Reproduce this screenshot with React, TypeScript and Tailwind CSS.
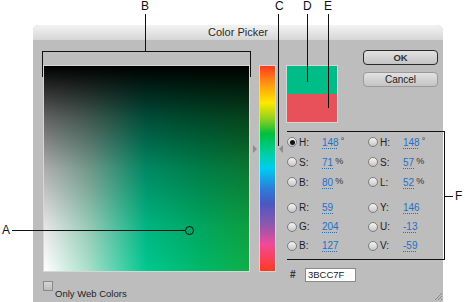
import React from 'react';

type Field = { label: string; value: string; unit?: string; checked?: boolean };

const groupA: [Field, Field][] = [
  [{ label: 'H:', value: '148', unit: '°', checked: true }, { label: 'H:', value: '148', unit: '°' }],
  [{ label: 'S:', value: '71', unit: '%' }, { label: 'S:', value: '57', unit: '%' }],
  [{ label: 'B:', value: '80', unit: '%' }, { label: 'L:', value: '52', unit: '%' }],
];

const groupB: [Field, Field][] = [
  [{ label: 'R:', value: '59' }, { label: 'Y:', value: '146' }],
  [{ label: 'G:', value: '204' }, { label: 'U:', value: '-13' }],
  [{ label: 'B:', value: '127' }, { label: 'V:', value: '-59' }],
];

function Radio({ checked }: { checked?: boolean }) {
  return (
    <span className="w-[10px] h-[10px] shrink-0 rounded-full border border-[#7d7d7d] bg-[linear-gradient(to_bottom,#f4f4f4,#c6c6c6)] flex items-center justify-center">
      {checked && <span className="w-[5px] h-[5px] rounded-full bg-[#111]" />}
    </span>
  );
}

function Cell({ f }: { f: Field }) {
  return (
    <div className="flex items-center">
      <Radio checked={f.checked} />
      <span className="ml-[2px] w-[23px] text-[10px] text-[#222]">{f.label}</span>
      <span className="text-[10px] text-[#1f70c8] underline decoration-dotted underline-offset-2">{f.value}</span>
      {f.unit && <span className="ml-[2px] text-[9px] text-[#333]">{f.unit}</span>}
    </div>
  );
}

function Callout({ label, x }: { label: string; x: number }) {
  return (
    <span className="absolute top-0 text-[12px] leading-[13px] text-[#111]" style={{ left: x }}>
      {label}
    </span>
  );
}

export default function App() {
  return (
    <div className="relative w-[465px] h-[302px] overflow-hidden bg-white font-['Liberation_Sans',Arial,sans-serif]">
      {/* dialog */}
      <div className="ml-[33px] pt-[25px]">
        <div className="w-[410px] h-[277px] rounded-t-[6px] bg-[#bdbdbd] overflow-hidden">
          <div className="h-[15px] bg-[linear-gradient(to_bottom,#f3f3f3,#d6d6d6)] flex items-center justify-center text-[11px] text-[#2a2a2a]">
            Color Picker
          </div>

          <div className="flex items-start pt-[10px] pl-[10px]">
            {/* saturation / brightness field */}
            <div className="mt-[15px] flex flex-col">
              <div className="relative w-[207px] h-[207px] border border-[#d6d6d6] bg-[linear-gradient(to_bottom,#000_0%,rgba(0,0,0,0.62)_25%,rgba(0,0,0,0.32)_50%,rgba(0,0,0,0.1)_78%,rgba(0,0,0,0)_100%),linear-gradient(to_right,#ffffff_0%,#a6dfca_22%,#00c890_50%,#00b86a_76%,#0eaf48_100%)]">
                <span className="absolute left-[141px] top-[160px] w-[9px] h-[9px] rounded-full border border-[#111]" />
              </div>
              <div className="mt-[9px] flex items-start">
                <span className="w-[10px] h-[10px] border border-[#8a8a8a] bg-[linear-gradient(to_bottom,#d6d6d6,#bdbdbd)]" />
                <span className="ml-[2px] mt-[6px] text-[9.5px] text-[#222]">Only Web Colors</span>
              </div>
            </div>

            {/* hue strip */}
            <div className="relative ml-[9px] mt-[15px] w-[17px] h-[207px] border border-[#d6d6d6] bg-[linear-gradient(to_bottom,#ff3a1e_0%,#ff9a10_9%,#ffe900_18%,#8cd020_26%,#00bf3c_33%,#00d0b0_44%,#00ccf2_50%,#2c7cd8_60%,#4a58c0_67%,#8a58b0_77%,#f04a98_87%,#ff3a20_100%)]">
              <span className="absolute left-[-7px] top-[79px] w-0 h-0 border-y-[4px] border-y-transparent border-l-[4px] border-l-[#8c8c8c]" />
              <span className="absolute right-[-8px] top-[79px] w-0 h-0 border-y-[4px] border-y-transparent border-r-[4px] border-r-[#8c8c8c]" />
            </div>

            {/* right side */}
            <div className="ml-[10px] w-[157px] flex flex-col">
              <div className="flex items-start">
                <div className="mt-[15px] w-[52px] h-[58px] border border-[#d6d6d6] flex flex-col">
                  <div className="h-[28px] bg-[#00bd88]" />
                  <div className="flex-1 bg-[#e8515a]" />
                </div>
                <div className="ml-[25px] flex flex-col gap-[7px]">
                  <button className="w-[75px] h-[15px] rounded-[4px] border border-[#2b2b2b] bg-[linear-gradient(to_bottom,#e2e2e2,#c4c4c4)] text-[9.5px] font-bold text-[#333] leading-none">
                    OK
                  </button>
                  <button className="w-[75px] h-[15px] rounded-[4px] border border-[#9a9a9a] bg-[linear-gradient(to_bottom,#e2e2e2,#c4c4c4)] text-[10px] text-[#222] leading-none">
                    Cancel
                  </button>
                </div>
              </div>

              <div className="mt-[9px] pl-[1px]">
                {groupA.map((r, i) => (
                  <div key={i} className="grid grid-cols-[81px_75px] h-[20px] items-center">
                    <Cell f={r[0]} />
                    <Cell f={r[1]} />
                  </div>
                ))}
                <div className="mt-[6px]">
                  {groupB.map((r, i) => (
                    <div key={i} className="grid grid-cols-[81px_75px] h-[19px] items-center">
                      <Cell f={r[0]} />
                      <Cell f={r[1]} />
                    </div>
                  ))}
                </div>
              </div>

              <div className="mt-[12px] flex items-center">
                <span className="ml-[4px] w-[15px] text-[10px] font-bold text-[#333]">#</span>
                <span className="w-[51px] h-[14px] border border-[#8a8a8a] bg-white pl-[2px] text-[9.5px] leading-[12px] text-[#222]">
                  3BCC7F
                </span>
              </div>
            </div>
          </div>
        </div>
      </div>

      {/* resize grip */}
      <svg className="absolute left-[434px] top-[292px]" width="9" height="9" viewBox="0 0 9 9">
        <path d="M8 1L1 8M8 4L4 8M8 7L7 8" stroke="#8a8a8a" strokeWidth="1" />
      </svg>

      {/* callouts */}
      <Callout label="B" x={141} />
      <Callout label="C" x={275} />
      <Callout label="D" x={303} />
      <Callout label="E" x={324} />
      <span className="absolute left-[2px] top-[224px] text-[12px] leading-[13px] text-[#111]">A</span>
      <span className="absolute left-[455px] top-[190px] text-[12px] leading-[13px] text-[#111]">F</span>

      {/* B bracket */}
      <div className="absolute left-[145px] top-[14px] w-px h-[38px] bg-[#111]" />
      <div className="absolute left-[42px] top-[51px] w-[209px] h-px bg-[#111]" />
      <div className="absolute left-[42px] top-[51px] w-px h-[26px] bg-[#111]" />
      <div className="absolute left-[250px] top-[51px] w-px h-[26px] bg-[#111]" />

      {/* C D E leaders */}
      <div className="absolute left-[278px] top-[14px] w-px h-[132px] bg-[#111]" />
      <div className="absolute left-[307px] top-[14px] w-px h-[68px] bg-[#111]" />
      <div className="absolute left-[328px] top-[14px] w-px h-[94px] bg-[#111]" />

      {/* A leader */}
      <div className="absolute left-[12px] top-[230px] w-[173px] h-px bg-[#111]" />

      {/* F bracket */}
      <div className="absolute left-[287px] top-[131px] w-[158px] h-px bg-[#111]" />
      <div className="absolute left-[444px] top-[131px] w-px h-[129px] bg-[#111]" />
      <div className="absolute left-[287px] top-[259px] w-[158px] h-px bg-[#111]" />
      <div className="absolute left-[444px] top-[196px] w-[9px] h-px bg-[#111]" />
    </div>
  );
}
